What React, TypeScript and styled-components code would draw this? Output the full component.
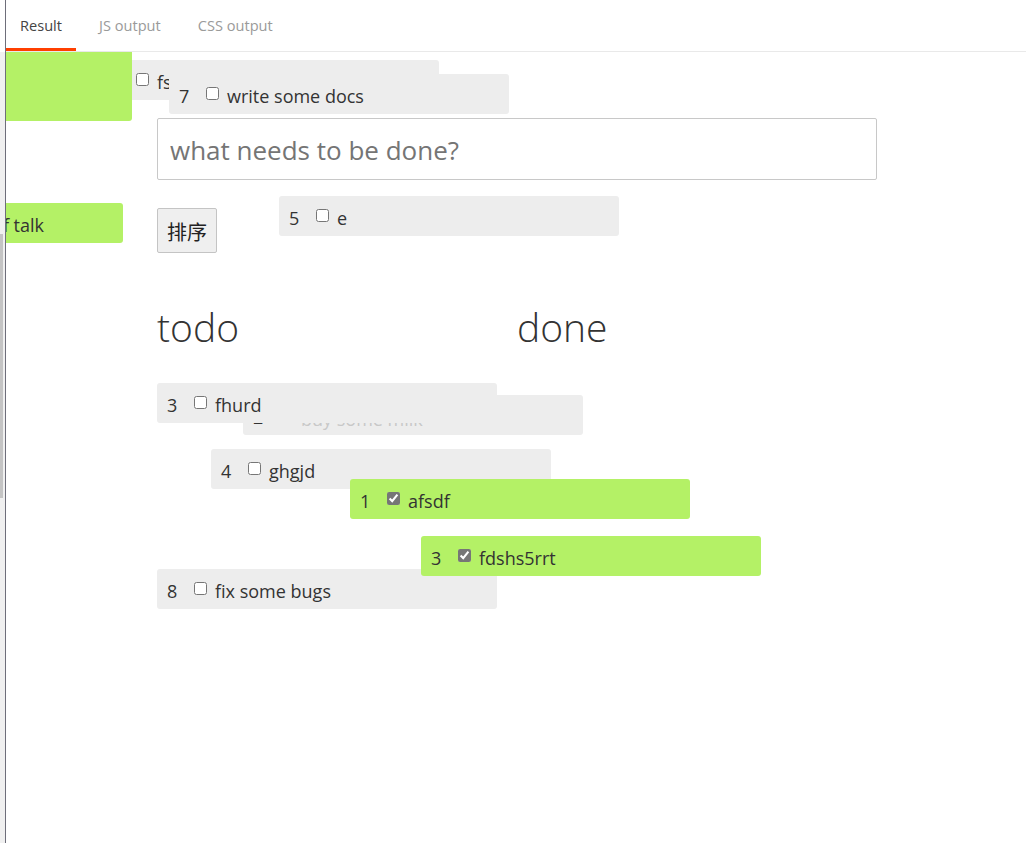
import { createGlobalStyle, styled } from "styled-components";

const GlobalStyle = createGlobalStyle`
  html, body {
    margin: 0;
    padding: 0;
    height: 100%;
    background: #fff;
  }
  body {
    font-family: "Open Sans", "Noto Sans", "Noto Sans CJK SC", sans-serif;
    color: #333;
  }
  #root {
    height: 100%;
  }
`;

const Frame = styled.div`
  display: flex;
  height: 843px;
  overflow: hidden;
`;

const Gutter = styled.div`
  width: 5px;
  display: flex;
  flex-direction: column;
`;
const GutterTop = styled.div`
  height: 52px;
  background: #fff;
`;
const GutterTrack = styled.div`
  flex: 1;
  background: #f0f0f0;
  padding-top: 182px;
`;
const GutterThumb = styled.div`
  width: 3px;
  height: 264px;
  background: #c4c4c4;
`;
const Divider = styled.div`
  width: 1px;
  background: #6e6e7a;
`;

const Main = styled.div`
  flex: 1;
  display: flex;
  flex-direction: column;
  min-width: 0;
`;

const Tabs = styled.div`
  height: 52px;
  display: flex;
  gap: 9px;
  border-bottom: 1px solid #e9e9e9;
  box-sizing: border-box;
`;
const Tab = styled.div<{ $active?: boolean }>`
  padding: 2px 14px 0 14px;
  display: flex;
  align-items: center;
  font-size: 14.6px;
  color: ${(p) => (p.$active ? "#444" : "#9a9a9a")};
  border-bottom: 3px solid ${(p) => (p.$active ? "#ff3f00" : "transparent")};
  box-sizing: border-box;
  height: 51px;
`;

const Pane = styled.div`
  flex: 1;
  position: relative;
  overflow: hidden;
`;

const Container = styled.div`
  width: 720px;
  margin: 0 auto;
  padding-top: 66px;
  position: relative;
  left: 1px;
`;

const NewTodo = styled.input`
  display: block;
  width: 100%;
  height: 62px;
  box-sizing: border-box;
  border: 1px solid #c8c8c8;
  border-radius: 2px;
  padding: 2px 12px 0;
  font-family: inherit;
  font-size: 26px;
  color: #333;
  outline: none;
  &::placeholder {
    color: #757575;
  }
`;

const SortButton = styled.button`
  margin-top: 28px;
  height: 45px;
  padding: 2px 9px 0;
  font-family: "Open Sans", "Noto Sans CJK SC", sans-serif;
  font-size: 20px;
  color: #222;
  background: #efefef;
  border: 1px solid #c4c4c4;
  border-radius: 2px;
`;

const Columns = styled.div`
  display: grid;
  grid-template-columns: 360px 360px;
  margin-top: 50px;
`;
const Heading = styled.h2`
  margin: 0;
  font-size: 39px;
  font-weight: 300;
  line-height: 48px;
  color: #333;
`;

const Item = styled.div<{ $done?: boolean }>`
  position: absolute;
  width: 340px;
  height: 40px;
  box-sizing: border-box;
  padding: 3px 10px 0;
  display: flex;
  align-items: center;
  border-radius: 3px;
  background: ${(p) => (p.$done ? "#b4f166" : "#ededed")};
  font-size: 18px;
  white-space: nowrap;
`;
const Num = styled.span`
  width: 10px;
  margin-right: 13px;
`;
const Check = styled.input`
  margin: 0 8px 4px 4px;
  width: 13px;
  height: 13px;
  accent-color: #767676;
`;
const Label = styled.span<{ $ghost?: boolean }>`
  color: ${(p) => (p.$ghost ? "#c8c8c8" : "#333")};
  padding-top: ${(p) => (p.$ghost ? "5px" : "0")};
`;

interface Todo {
  id: number;
  text: string;
  done: boolean;
  x: number;
  y: number;
  ghost?: boolean;
}

// dragged items, drawn in stacking order
const todos: Todo[] = [
  { id: 6, text: "fsdfsf", done: false, x: 93, y: 8 },
  { id: 9, text: "sdfsd", done: true, x: -214, y: -6 },
  { id: 9, text: "sdfsd", done: true, x: -214, y: 29 },
  { id: 7, text: "write some docs", done: false, x: 163, y: 22 },
  { id: 2, text: "write the outlines of talk", done: true, x: -223, y: 151 },
  { id: 5, text: "e", done: false, x: 273, y: 144 },
  { id: 2, text: "buy some milk", done: false, x: 237, y: 343, ghost: true },
  { id: 3, text: "fhurd", done: false, x: 151, y: 331 },
  { id: 4, text: "ghgjd", done: false, x: 205, y: 397 },
  { id: 8, text: "fix some bugs", done: false, x: 151, y: 517 },
  { id: 1, text: "afsdf", done: true, x: 344, y: 427 },
  { id: 3, text: "fdshs5rrt", done: true, x: 415, y: 484 },
];

function App() {
  return (
    <>
      <GlobalStyle />
      <Frame>
        <Gutter>
          <GutterTop />
          <GutterTrack>
            <GutterThumb />
          </GutterTrack>
        </Gutter>
        <Divider />
        <Main>
          <Tabs>
            <Tab $active>Result</Tab>
            <Tab>JS output</Tab>
            <Tab>CSS output</Tab>
          </Tabs>
          <Pane>
            <Container>
              <NewTodo placeholder="what needs to be done?" />
              <SortButton>排序</SortButton>
              <Columns>
                <Heading>todo</Heading>
                <Heading>done</Heading>
              </Columns>
            </Container>
            {todos.map((t, i) => (
              <Item key={i} $done={t.done} style={{ left: t.x, top: t.y }}>
                <Num>{t.id}</Num>
                <Check type="checkbox" defaultChecked={t.done} />
                <Label $ghost={t.ghost}>{t.text}</Label>
              </Item>
            ))}
          </Pane>
        </Main>
      </Frame>
    </>
  );
}

export default App;
